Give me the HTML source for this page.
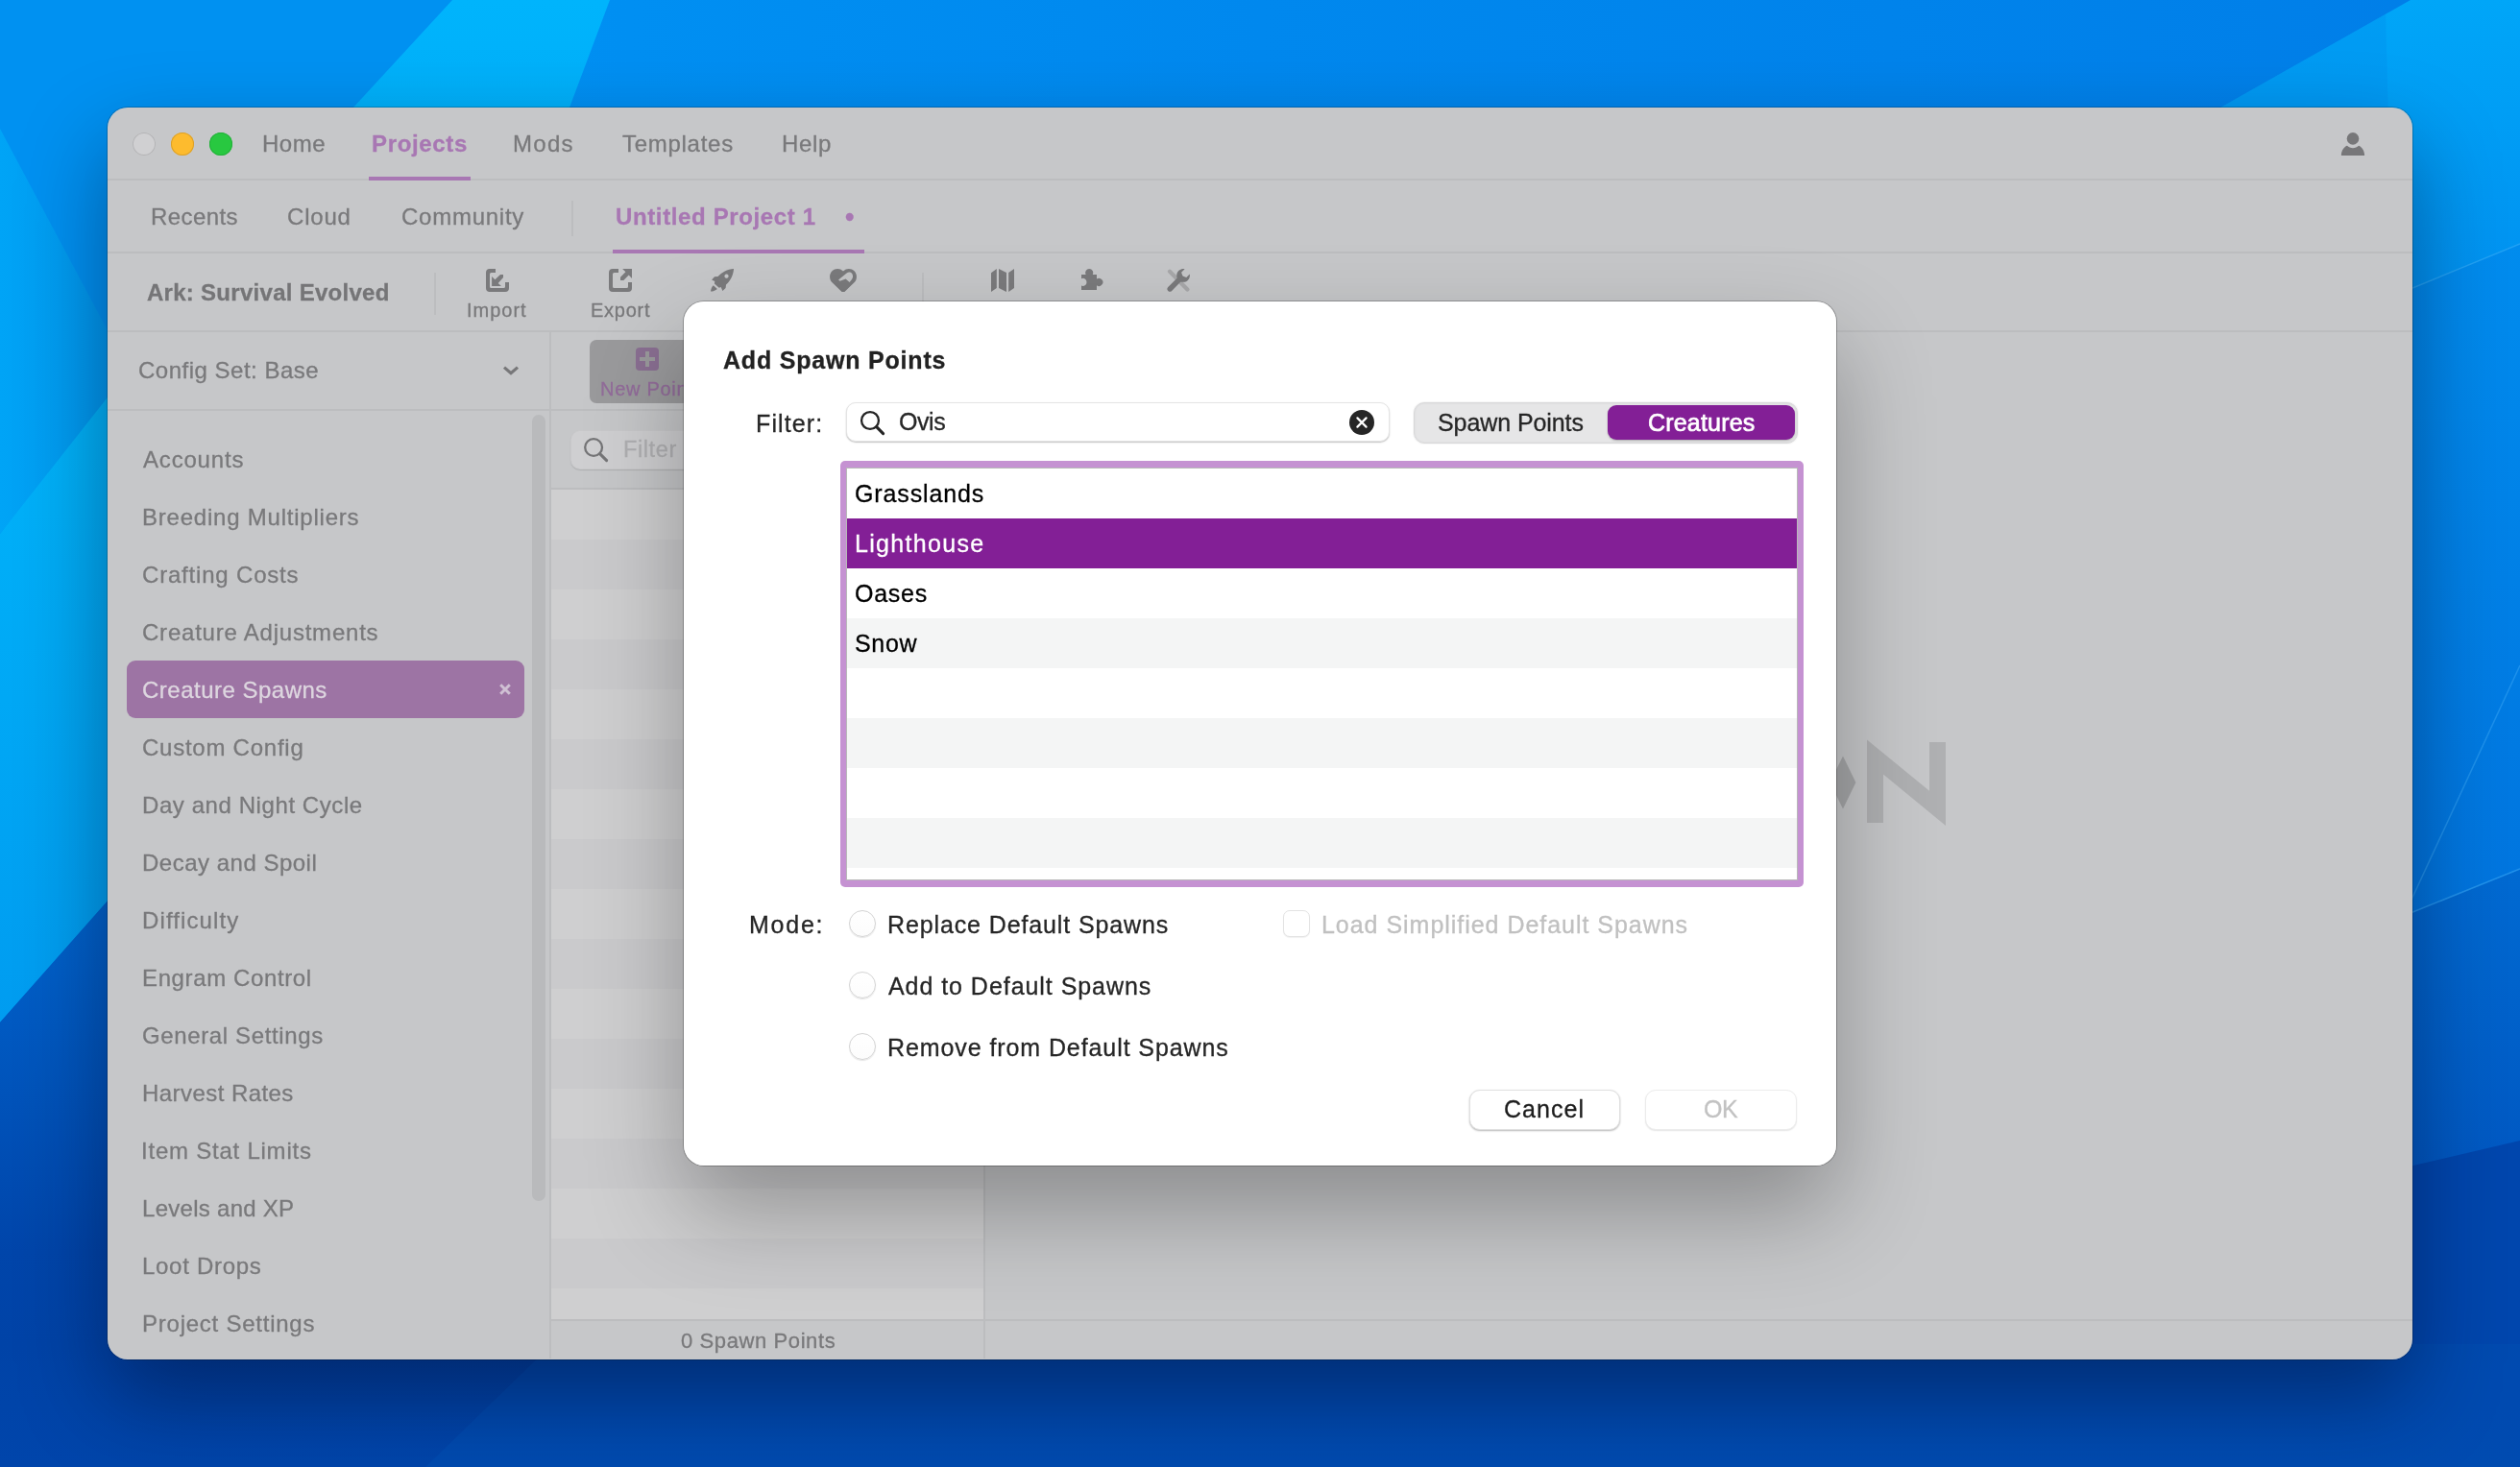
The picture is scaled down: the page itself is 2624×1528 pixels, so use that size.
<!DOCTYPE html>
<html lang="en">
<head>
<meta charset="utf-8">
<title>Beacon - Add Spawn Points</title>
<style>
html,body{margin:0;padding:0;}
body{width:2624px;height:1528px;overflow:hidden;position:relative;background:#0070d8;
  font-family:"Liberation Sans",sans-serif;-webkit-font-smoothing:antialiased;}
#wall{position:absolute;left:0;top:0;width:2624px;height:1528px;display:block;}
.abs{position:absolute;}
.t{will-change:transform;position:absolute;white-space:nowrap;line-height:30px;height:30px;display:block;}
#win{position:absolute;left:112px;top:112px;width:2400px;height:1303.6px;border-radius:21px;
  background:#c6c7c9;overflow:hidden;}
#winshadow{position:absolute;left:112px;top:112px;width:2400px;height:1303.6px;border-radius:21px;
  box-shadow:0 0 0 1px rgba(0,0,0,.20),0 40px 90px 0 rgba(0,0,24,.40);}
#wi{position:absolute;left:-112px;top:-112px;width:2624px;height:1528px;}
.hl{position:absolute;height:2px;background:#bcbdbf;}
.vl{position:absolute;width:2px;background:#bcbdbf;}
#dlg{position:absolute;left:712px;top:314px;width:1200px;height:900px;border-radius:21px;
  background:#ffffff;overflow:hidden;}
#dlgshadow{position:absolute;left:712px;top:314px;width:1200px;height:900px;border-radius:21px;
  box-shadow:0 0 0 1px rgba(0,0,0,.26),0 46px 100px 0 rgba(0,0,0,.30);}
#di{position:absolute;left:-712px;top:-314px;width:2624px;height:1528px;}
.row{position:absolute;left:882px;width:989px;height:52px;}
.radio{position:absolute;width:28px;height:28px;border-radius:50%;box-sizing:border-box;
  background:linear-gradient(#ffffff,#fcfcfc);border:1px solid #d4d4d4;box-shadow:0 1px 1px rgba(0,0,0,.10);}
.btn{position:absolute;box-sizing:border-box;border-radius:11px;background:#fff;}
</style>
</head>
<body>
<svg id="wall" width="2624" height="1528" viewBox="0 0 2624 1528" aria-hidden="true">
<defs>
<linearGradient id="gBase" x1="0" y1="0" x2="0" y2="1">
  <stop offset="0" stop-color="#0090f1"/><stop offset="0.45" stop-color="#0082e8"/>
  <stop offset="0.75" stop-color="#005cc6"/><stop offset="1" stop-color="#0042a6"/>
</linearGradient>
<linearGradient id="gTop" x1="0" y1="0" x2="1" y2="0">
  <stop offset="0" stop-color="#0096f6"/><stop offset="0.5" stop-color="#0088ee"/><stop offset="1" stop-color="#007ee8"/>
</linearGradient>
<linearGradient id="gBand" x1="0" y1="0" x2="0" y2="1">
  <stop offset="0" stop-color="#00b4fc"/><stop offset="1" stop-color="#00aaf6"/>
</linearGradient>
<linearGradient id="gL2" x1="0" y1="0" x2="1" y2="0">
  <stop offset="0" stop-color="#00a4f6"/><stop offset="1" stop-color="#0096ee"/>
</linearGradient>
<linearGradient id="gL3" x1="0" y1="0" x2="0" y2="1">
  <stop offset="0" stop-color="#00b4fa"/><stop offset="1" stop-color="#009cf0"/>
</linearGradient>
<linearGradient id="gL4" x1="0" y1="0" x2="0" y2="1">
  <stop offset="0" stop-color="#0066d0"/><stop offset="0.8" stop-color="#0045aa"/><stop offset="1" stop-color="#0043a7"/>
</linearGradient>
<linearGradient id="gR1" x1="0" y1="0" x2="0" y2="1">
  <stop offset="0" stop-color="#00a6f8"/><stop offset="1" stop-color="#0090f0"/>
</linearGradient>
<linearGradient id="gR2" x1="0" y1="0" x2="0" y2="1">
  <stop offset="0" stop-color="#008cee"/><stop offset="1" stop-color="#0074de"/>
</linearGradient>
<linearGradient id="gR3" x1="0" y1="0" x2="0" y2="1">
  <stop offset="0" stop-color="#006ad2"/><stop offset="1" stop-color="#0058c2"/>
</linearGradient>
<linearGradient id="gB" x1="0" y1="0" x2="0" y2="1">
  <stop offset="0" stop-color="#0043a7"/><stop offset="1" stop-color="#0045ab"/>
</linearGradient>
</defs>
<rect width="2624" height="1528" fill="url(#gBase)"/>
<!-- top strip -->
<rect x="0" y="0" width="2624" height="240" fill="url(#gTop)"/>
<polygon points="0,0 471,0 250,240 130,240 130,400 0,400" fill="#0091f1"/>
<polygon points="471,0 635,0 545,240 250,240" fill="url(#gBand)"/>
<polygon points="2510,0 2624,0 2624,320 2512,320 2512,240 2086,240" fill="url(#gR1)"/>
<polygon points="2510,0 2484,14.7 2490,240 2086,240" fill="#0088e8" opacity=".28"/>
<!-- left strip -->
<polygon points="0,134 130,378 130,400 0,556" fill="url(#gL2)"/>
<polygon points="0,556 130,391 130,918 0,1065" fill="url(#gL3)"/>
<polygon points="0,1065 130,918 130,1400 0,1400" fill="url(#gL4)"/>
<!-- right strip -->
<polygon points="2500,305 2624,254 2624,905 2500,955" fill="url(#gR2)"/>
<polygon points="2500,955 2624,905 2624,1188 2500,1217" fill="url(#gR3)"/>
<polygon points="2500,1217 2624,1188 2624,1400 2500,1400" fill="#0046ad"/>
<line x1="2500" y1="305" x2="2624" y2="254" stroke="#2aa6f6" stroke-width="1.5" opacity=".8"/>
<line x1="2500" y1="955" x2="2624" y2="905" stroke="#2a9af0" stroke-width="1.5" opacity=".8"/>
<line x1="2505" y1="950" x2="2624" y2="693" stroke="#2a9af0" stroke-width="1.5" opacity=".7"/>
<!-- bottom strip -->
<rect x="0" y="1400" width="2624" height="128" fill="url(#gB)"/>
<polygon points="575,1400 2624,1400 2624,1528 443,1528" fill="#004cb2" opacity=".8"/>
</svg>

<div id="winshadow"></div>
<div id="win"><div id="wi">
<!-- traffic lights -->
<div class="abs" style="left:138px;top:138px;width:24px;height:24px;border-radius:50%;background:#d0d0d2;box-shadow:inset 0 0 0 1px #b4b4b6;"></div>
<div class="abs" style="left:178px;top:138px;width:24px;height:24px;border-radius:50%;background:#fdbb2e;box-shadow:inset 0 0 0 1px #dba02a;"></div>
<div class="abs" style="left:218px;top:138px;width:24px;height:24px;border-radius:50%;background:#28c840;box-shadow:inset 0 0 0 1px #24b03a;"></div>
<!-- separators -->
<div class="hl" style="left:112px;top:186px;width:2400px;"></div>
<div class="hl" style="left:112px;top:262px;width:2400px;"></div>
<div class="hl" style="left:112px;top:344px;width:2400px;"></div>
<div class="hl" style="left:112px;top:426px;width:913px;"></div>
<div class="vl" style="left:572px;top:346px;height:1069px;"></div>
<div class="vl" style="left:1024px;top:510px;height:905px;"></div>
<div class="hl" style="left:574px;top:508px;width:452px;"></div>
<div class="hl" style="left:574px;top:1374px;width:1938px;"></div>
<div class="vl" style="left:595px;top:209px;height:37px;"></div>
<div class="vl" style="left:452px;top:284px;height:44px;"></div>
<div class="vl" style="left:960px;top:284px;height:44px;"></div>
<!-- active underlines -->
<div class="abs" style="left:384px;top:184px;width:106px;height:4px;background:#a877b3;"></div>
<div class="abs" style="left:638px;top:260px;width:262px;height:4px;background:#a877b3;"></div>
<!-- sidebar scrollbar + selection -->
<div class="abs" style="left:554px;top:432px;width:14px;height:819px;border-radius:7px;background:#b9babc;"></div>
<div class="abs" style="left:132px;top:688px;width:414px;height:60px;border-radius:9px;background:#9d74a4;"></div>
<!-- middle column stripes -->
<div class="abs" style="left:574px;top:510px;width:450px;height:864px;background:repeating-linear-gradient(#cfcfd0 0,#cfcfd0 52px,#cacacc 52px,#cacacc 104px);"></div>
<!-- new point button + filter field -->
<div class="abs" style="left:614px;top:354px;width:200px;height:66px;border-radius:7px;background:#9a9a9c;"></div>
<div class="abs" style="left:594px;top:447.5px;width:400px;height:41px;border-radius:10px;background:#cfcfd1;box-shadow:0 1px 1px rgba(0,0,0,.12),inset 0 0 0 1px rgba(0,0,0,.03);"></div>
<!-- plus icon in New Point button -->
<svg class="abs" style="left:662px;top:362px;" width="24" height="24" viewBox="0 0 24 24"><rect width="24" height="24" rx="4" fill="#8a6f92"/><path d="M10 4h4v6h6v4h-6v6h-4v-6H4v-4h6z" fill="#9a9a9c"/></svg>
<!-- chevron -->
<svg class="abs" style="left:522px;top:380px;" width="20" height="12" viewBox="0 0 20 12"><path d="M3 2.6 L10 8.6 L17 2.6" fill="none" stroke="#777779" stroke-width="3.2" stroke-linejoin="miter"/></svg>
<!-- sidebar close x -->
<svg class="abs" style="left:519px;top:711px;" width="14" height="14" viewBox="0 0 14 14"><path d="M2.2 2.2 L11.8 11.8 M11.8 2.2 L2.2 11.8" stroke="#cfc0d3" stroke-width="3" fill="none"/></svg>
<!-- filter search icon -->
<svg class="abs" style="left:606px;top:454px;" width="30" height="30" viewBox="0 0 30 30"><circle cx="12.1" cy="12" r="8.9" fill="none" stroke="#757577" stroke-width="2.3"/><path d="M18.6 18.6 L25.6 25.6" stroke="#757577" stroke-width="3" stroke-linecap="round"/></svg>
<!-- toolbar icons -->
<svg class="abs" style="left:506px;top:280px;" width="24" height="24" viewBox="0 0 24 24" fill="#7a7a7c"><path d="M10 0H4A4 4 0 0 0 0 4V20A4 4 0 0 0 4 24H20A4 4 0 0 0 24 20V14H20V18.500A1.500 1.500 0 0 1 18.500 20H5.500A1.500 1.500 0 0 1 4 18.500V5.500A1.500 1.500 0 0 1 5.500 4H10Z"/><path d="M6.100 8 L9.400 11.300 L15 6 H18 V9.100 L12.700 14.900 L16 17.900 H6.100Z"/></svg>
<svg class="abs" style="left:634px;top:280px;" width="24" height="24" viewBox="0 0 24 24" fill="#7a7a7c"><path d="M10 0H4A4 4 0 0 0 0 4V20A4 4 0 0 0 4 24H20A4 4 0 0 0 24 20V14H20V18.500A1.500 1.500 0 0 1 18.500 20H5.500A1.500 1.500 0 0 1 4 18.500V5.500A1.500 1.500 0 0 1 5.500 4H10Z"/><path d="M14.100 0 H24 V9.900 L20.700 6.600 L15.300 12 H12 V8.700 L17.400 3.300Z"/></svg>
<!-- rocket -->
<svg class="abs" style="left:740px;top:280px;" width="24" height="24" viewBox="0 0 24 24" fill="#7a7a7c"><path fill-rule="evenodd" d="M24 0 C17.500 .400 11.500 3.600 7.600 8.100 L4 8.300 L1.100 11.400 L4.300 13 L3.900 15.600 L8.800 19.700 L10.700 19 L12.400 22.900 L15.600 19.900 L16 16.500 C20.500 12.500 23.700 6.500 24 0Z M16.500 5.500 a2.100 2.100 0 1 0 .01 0Z"/><path d="M0 23.600 C.200 21 1.200 18.800 2.800 17.300 L6.800 21 C5.200 22.600 2.800 23.500 0 23.600Z"/></svg>
<!-- heart (donate) -->
<svg class="abs" style="left:864px;top:280px;" width="28" height="24" viewBox="0 0 28 24"><path fill="#7a7a7c" d="M14 24 L12.600 24 L2.800 14.600 C-.800 11 -.800 5.500 2.500 2.300 C5.700 -.700 10.700 -.700 14 2.600 C17.300 -.700 22.300 -.700 25.500 2.300 C28.800 5.500 28.800 11 25.200 14.600 L15.400 24Z"/><path fill="#c4c5c7" d="M9 11.400 L17.600 4.400 C19.600 3 22.200 3.200 23.400 5.200 C24.600 7.300 24.200 9.800 22.400 11.800 L20.600 13.900 L16.600 10.400 L10.600 12.700Z"/></svg>
<!-- map -->
<svg class="abs" style="left:1032px;top:280px;" width="24" height="24" viewBox="0 0 24 24" fill="#7a7a7c"><path d="M0 4.200 L5.800 0 V20 L0 24Z M8 0 L16 4 V24 L8 20Z M18.200 4 L24 0 V20 L18.200 24Z"/></svg>
<!-- puzzle -->
<svg class="abs" style="left:1126px;top:280px;" width="24" height="24" viewBox="0 0 24 24" fill="#7a7a7c"><path d="M0 6.100 H4.600 A4.100 4.100 0 1 1 11.800 6.100 H16 V10.500 A4.100 4.100 0 1 1 16 17.300 V22 H0 V17.600 A4 4 0 1 0 0 10.200Z"/></svg>
<!-- tools -->
<svg class="abs" style="left:1215px;top:280px;" width="24" height="24" viewBox="0 0 24 24"><path d="M3 2.800 L21.400 21.400" stroke="#a8a8aa" stroke-width="4.2" stroke-linecap="round" fill="none"/><path d="M3.200 21 L14.500 9.700" stroke="#7a7a7c" stroke-width="5.400" stroke-linecap="round" fill="none"/><path fill="#7a7a7c" d="M18.600 .200 C15 -.600 11.200 1.800 10.400 5.600 C9.900 8 10.700 10.400 12.300 12 C14 13.600 16.300 14.200 18.500 13.700 C22.100 12.900 24.500 9.300 23.800 5.600 L20.300 9 L16.500 7.600 L15.100 3.700Z"/></svg>
<!-- user icon -->
<svg class="abs" style="left:2437px;top:137px;" width="26" height="26" viewBox="0 0 26 26" fill="#777779"><circle cx="13" cy="7.400" r="6.300"/><path d="M.900 24.900 C.900 20 3.600 16 7 14.800 C8.600 16.400 10.700 17.200 13 17.200 C15.300 17.200 17.400 16.400 19 14.800 C22.400 16 25.100 20 25.100 24.900Z"/></svg>
<!-- watermark logo fragment -->
<svg class="abs" style="left:1900px;top:760px;" width="140" height="110" viewBox="1900 760 140 110"><path fill="#afb0b2" d="M1944 770.500 L2009 823.800 V773 H2026 V860 L1961 806.500 V857 H1944Z"/><path fill="#a6a7a9" d="M1905.500 815 L1919 787.400 L1932.400 815 L1919 842.600Z"/></svg>

<span class="t" style="left:273.0px;top:135.1px;font-size:24px;font-weight:400;color:#79797b;letter-spacing:0.53px;-webkit-text-stroke:0.3px currentColor;">Home</span>
<span class="t" style="left:387.3px;top:135.1px;font-size:24px;font-weight:700;color:#a877b3;letter-spacing:0.66px;-webkit-text-stroke:0.3px currentColor;">Projects</span>
<span class="t" style="left:533.8px;top:135.1px;font-size:24px;font-weight:400;color:#79797b;letter-spacing:1.30px;-webkit-text-stroke:0.3px currentColor;">Mods</span>
<span class="t" style="left:648.0px;top:135.1px;font-size:24px;font-weight:400;color:#79797b;letter-spacing:0.72px;-webkit-text-stroke:0.3px currentColor;">Templates</span>
<span class="t" style="left:814.0px;top:135.1px;font-size:24px;font-weight:400;color:#79797b;letter-spacing:0.67px;-webkit-text-stroke:0.3px currentColor;">Help</span>
<span class="t" style="left:157.0px;top:211.1px;font-size:24px;font-weight:400;color:#79797b;letter-spacing:0.42px;-webkit-text-stroke:0.3px currentColor;">Recents</span>
<span class="t" style="left:298.8px;top:211.1px;font-size:24px;font-weight:400;color:#79797b;letter-spacing:0.80px;-webkit-text-stroke:0.3px currentColor;">Cloud</span>
<span class="t" style="left:418.0px;top:211.1px;font-size:24px;font-weight:400;color:#79797b;letter-spacing:0.75px;-webkit-text-stroke:0.3px currentColor;">Community</span>
<span class="t" style="left:641.0px;top:211.1px;font-size:24px;font-weight:700;color:#a877b3;letter-spacing:0.63px;-webkit-text-stroke:0.3px currentColor;">Untitled Project 1</span>
<span class="t" style="left:879.8px;top:210.8px;font-size:27px;font-weight:700;color:#a877b3;letter-spacing:0.00px;-webkit-text-stroke:0.3px currentColor;">•</span>
<span class="t" style="left:153.0px;top:289.9px;font-size:24px;font-weight:700;color:#757577;letter-spacing:0.28px;-webkit-text-stroke:0.3px currentColor;">Ark: Survival Evolved</span>
<span class="t" style="left:486.0px;top:308.1px;font-size:20px;font-weight:400;color:#79797b;letter-spacing:1.00px;-webkit-text-stroke:0.3px currentColor;">Import</span>
<span class="t" style="left:615.0px;top:308.1px;font-size:20px;font-weight:400;color:#79797b;letter-spacing:0.74px;-webkit-text-stroke:0.3px currentColor;">Export</span>
<span class="t" style="left:144.0px;top:370.5px;font-size:24px;font-weight:400;color:#79797b;letter-spacing:0.50px;-webkit-text-stroke:0.3px currentColor;">Config Set: Base</span>
<span class="t" style="left:149.0px;top:463.7px;font-size:24px;font-weight:400;color:#79797b;letter-spacing:0.81px;-webkit-text-stroke:0.3px currentColor;">Accounts</span>
<span class="t" style="left:148.0px;top:523.7px;font-size:24px;font-weight:400;color:#79797b;letter-spacing:0.78px;-webkit-text-stroke:0.3px currentColor;">Breeding Multipliers</span>
<span class="t" style="left:148.0px;top:583.7px;font-size:24px;font-weight:400;color:#79797b;letter-spacing:0.81px;-webkit-text-stroke:0.3px currentColor;">Crafting Costs</span>
<span class="t" style="left:148.0px;top:643.7px;font-size:24px;font-weight:400;color:#79797b;letter-spacing:0.78px;-webkit-text-stroke:0.3px currentColor;">Creature Adjustments</span>
<span class="t" style="left:148.0px;top:703.7px;font-size:24px;font-weight:400;color:#ddd6df;letter-spacing:0.49px;-webkit-text-stroke:0.3px currentColor;">Creature Spawns</span>
<span class="t" style="left:148.0px;top:763.7px;font-size:24px;font-weight:400;color:#79797b;letter-spacing:0.75px;-webkit-text-stroke:0.3px currentColor;">Custom Config</span>
<span class="t" style="left:148.0px;top:823.7px;font-size:24px;font-weight:400;color:#79797b;letter-spacing:0.58px;-webkit-text-stroke:0.3px currentColor;">Day and Night Cycle</span>
<span class="t" style="left:148.0px;top:883.7px;font-size:24px;font-weight:400;color:#79797b;letter-spacing:0.50px;-webkit-text-stroke:0.3px currentColor;">Decay and Spoil</span>
<span class="t" style="left:148.0px;top:943.7px;font-size:24px;font-weight:400;color:#79797b;letter-spacing:1.11px;-webkit-text-stroke:0.3px currentColor;">Difficulty</span>
<span class="t" style="left:148.0px;top:1003.7px;font-size:24px;font-weight:400;color:#79797b;letter-spacing:0.62px;-webkit-text-stroke:0.3px currentColor;">Engram Control</span>
<span class="t" style="left:148.0px;top:1063.7px;font-size:24px;font-weight:400;color:#79797b;letter-spacing:0.63px;-webkit-text-stroke:0.3px currentColor;">General Settings</span>
<span class="t" style="left:148.0px;top:1123.7px;font-size:24px;font-weight:400;color:#79797b;letter-spacing:0.44px;-webkit-text-stroke:0.3px currentColor;">Harvest Rates</span>
<span class="t" style="left:147.0px;top:1183.7px;font-size:24px;font-weight:400;color:#79797b;letter-spacing:0.77px;-webkit-text-stroke:0.3px currentColor;">Item Stat Limits</span>
<span class="t" style="left:148.0px;top:1243.7px;font-size:24px;font-weight:400;color:#79797b;letter-spacing:0.28px;-webkit-text-stroke:0.3px currentColor;">Levels and XP</span>
<span class="t" style="left:148.0px;top:1303.7px;font-size:24px;font-weight:400;color:#79797b;letter-spacing:0.71px;-webkit-text-stroke:0.3px currentColor;">Loot Drops</span>
<span class="t" style="left:148.0px;top:1363.7px;font-size:24px;font-weight:400;color:#79797b;letter-spacing:0.76px;-webkit-text-stroke:0.3px currentColor;">Project Settings</span>
<span class="t" style="left:625.3px;top:389.8px;font-size:20px;font-weight:400;color:#926c9a;letter-spacing:0.71px;-webkit-text-stroke:0.3px currentColor;">New Point</span>
<span class="t" style="left:648.5px;top:452.6px;font-size:23.5px;font-weight:400;color:#b0b0b2;letter-spacing:0.60px;-webkit-text-stroke:0.3px currentColor;">Filter</span>
<span class="t" style="left:708.5px;top:1381.9px;font-size:22px;font-weight:400;color:#79797b;letter-spacing:0.60px;-webkit-text-stroke:0.3px currentColor;">0 Spawn Points</span>
</div></div>
<div id="dlgshadow"></div>
<div id="dlg"><div id="di">
<!-- search field -->
<div class="abs" style="left:881px;top:418.8px;width:565.5px;height:41.7px;border-radius:10px;box-sizing:border-box;background:#fff;border:1px solid #e4e4e4;box-shadow:0 1px 1.5px rgba(0,0,0,.25);"></div>
<!-- segmented control -->
<div class="abs" style="left:1472px;top:418.5px;width:400px;height:43px;border-radius:11px;box-sizing:border-box;background:#e6e6e7;border:1px solid #d9d9da;box-shadow:inset 0 0 2px rgba(0,0,0,.08),0 0 0 1px rgba(0,0,0,.03);"></div>
<div class="abs" style="left:1674px;top:422px;width:195px;height:36px;border-radius:9px;background:#831f96;box-shadow:0 1px 2px rgba(0,0,0,.25);"></div>
<!-- list -->
<div class="abs" style="left:874.7px;top:480.4px;width:1003px;height:443.4px;border-radius:5px;background:#c592d2;"></div>
<div class="abs" style="left:881px;top:487px;width:990.5px;height:429.8px;background:#fff;box-shadow:inset 0 0 0 1px #b8b8b8;"></div>
<div class="row" style="top:540px;background:#831f96;"></div>
<div class="row" style="top:644px;background:#f4f5f5;"></div>
<div class="row" style="top:748px;background:#f4f5f5;"></div>
<div class="row" style="top:852px;background:#f4f5f5;"></div>
<!-- radios -->
<div class="radio" style="left:884px;top:948px;"></div>
<div class="radio" style="left:884px;top:1012px;"></div>
<div class="radio" style="left:884px;top:1076px;"></div>
<!-- checkbox -->
<div class="abs" style="left:1336px;top:948px;width:28px;height:28px;border-radius:7px;box-sizing:border-box;background:#fff;border:1px solid #e3e3e3;box-shadow:0 1px 1px rgba(0,0,0,.06);"></div>
<!-- buttons -->
<div class="btn" style="left:1530px;top:1135px;width:157px;height:42px;border:1px solid #e0e0e0;box-shadow:0 1px 2px rgba(0,0,0,.28);"></div>
<div class="btn" style="left:1713px;top:1135px;width:158px;height:42px;border:1px solid #ececec;box-shadow:0 1px 1.5px rgba(0,0,0,.10);"></div>
<!-- search icon -->
<svg class="abs" style="left:894px;top:426px;" width="30" height="30" viewBox="0 0 30 30"><circle cx="12" cy="12" r="8.950" fill="none" stroke="#242424" stroke-width="2.300"/><path d="M18.700 18.700 L25.600 25.600" stroke="#242424" stroke-width="3.100" stroke-linecap="round"/></svg>
<!-- clear button -->
<svg class="abs" style="left:1405px;top:427px;" width="26" height="26" viewBox="0 0 26 26"><circle cx="13" cy="13" r="13" fill="#262626"/><path d="M8.4 8.4 L17.6 17.6 M17.6 8.4 L8.4 17.6" stroke="#fff" stroke-width="2.2" stroke-linecap="round"/></svg>

<span class="t" style="left:753.0px;top:360.3px;font-size:25px;font-weight:700;color:#222222;letter-spacing:0.80px;-webkit-text-stroke:0.3px currentColor;">Add Spawn Points</span>
<span class="t" style="left:787.3px;top:425.9px;font-size:25px;font-weight:400;color:#262626;letter-spacing:1.12px;-webkit-text-stroke:0.3px currentColor;">Filter:</span>
<span class="t" style="left:936.0px;top:424.3px;font-size:25px;font-weight:400;color:#262626;letter-spacing:-0.43px;-webkit-text-stroke:0.3px currentColor;">Ovis</span>
<span class="t" style="left:1496.7px;top:424.6px;font-size:25px;font-weight:400;color:#262626;letter-spacing:-0.08px;-webkit-text-stroke:0.3px currentColor;">Spawn Points</span>
<span class="t" style="left:1715.7px;top:424.6px;font-size:25px;font-weight:400;color:#ffffff;letter-spacing:0.19px;-webkit-text-stroke:0.7px #fff;">Creatures</span>
<span class="t" style="left:890.0px;top:499.3px;font-size:25px;font-weight:400;color:#000000;letter-spacing:0.88px;-webkit-text-stroke:0.3px currentColor;">Grasslands</span>
<span class="t" style="left:890.0px;top:551.3px;font-size:25px;font-weight:400;color:#ffffff;letter-spacing:1.32px;-webkit-text-stroke:0.3px currentColor;">Lighthouse</span>
<span class="t" style="left:890.0px;top:603.3px;font-size:25px;font-weight:400;color:#000000;letter-spacing:0.75px;-webkit-text-stroke:0.3px currentColor;">Oases</span>
<span class="t" style="left:890.0px;top:655.3px;font-size:25px;font-weight:400;color:#000000;letter-spacing:0.67px;-webkit-text-stroke:0.3px currentColor;">Snow</span>
<span class="t" style="left:780.0px;top:947.9px;font-size:25px;font-weight:400;color:#262626;letter-spacing:1.75px;-webkit-text-stroke:0.3px currentColor;">Mode:</span>
<span class="t" style="left:924.0px;top:947.9px;font-size:25px;font-weight:400;color:#262626;letter-spacing:0.88px;-webkit-text-stroke:0.3px currentColor;">Replace Default Spawns</span>
<span class="t" style="left:925.0px;top:1011.9px;font-size:25px;font-weight:400;color:#262626;letter-spacing:0.95px;-webkit-text-stroke:0.3px currentColor;">Add to Default Spawns</span>
<span class="t" style="left:924.0px;top:1075.9px;font-size:25px;font-weight:400;color:#262626;letter-spacing:0.91px;-webkit-text-stroke:0.3px currentColor;">Remove from Default Spawns</span>
<span class="t" style="left:1376.0px;top:948.3px;font-size:25px;font-weight:400;color:#c0c0c0;letter-spacing:0.97px;-webkit-text-stroke:0.3px currentColor;">Load Simplified Default Spawns</span>
<span class="t" style="left:1566.0px;top:1140.3px;font-size:25px;font-weight:400;color:#1d1d1d;letter-spacing:1.06px;-webkit-text-stroke:0.3px currentColor;">Cancel</span>
<span class="t" style="left:1773.7px;top:1140.3px;font-size:25px;font-weight:400;color:#c2c2c2;letter-spacing:-0.40px;-webkit-text-stroke:0.3px currentColor;">OK</span>
</div></div>
</body>
</html>
